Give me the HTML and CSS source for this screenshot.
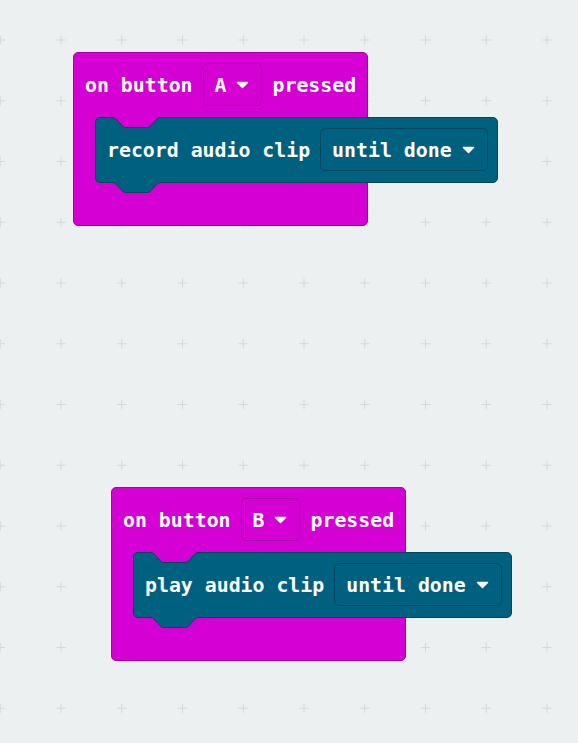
FILE: index.html
```html
<!DOCTYPE html>
<html>
<head>
    <meta charset="utf-8">
    <title>Blocks</title>
    <link rel="stylesheet" href="styles.css">
</head>
<body>
    <div class="workspace">
        <!-- background grid of small crosses -->
        <svg class="grid" width="578" height="743">
            <defs>
                <pattern id="grid-cross" x="-30.125" y="9.625" width="60.75" height="60.75" patternUnits="userSpaceOnUse">
                    <path d="M25.6 30.375 H35.15 M30.375 25.6 V35.15" stroke="#d3d8db" stroke-width="1"/>
                </pattern>
            </defs>
            <rect width="100%" height="100%" fill="url(#grid-cross)"/>
        </svg>

        <div class="event stack-a">
            <div class="event-head">
                <span class="label">on button</span>
                <span class="dropdown">A<svg class="caret" width="13" height="8" viewBox="0 0 13 8"><path d="M1.5 1.5 H11.5 L6.5 6.5 Z"/></svg></span>
                <span class="label">pressed</span>
            </div>
            <div class="event-body">
                <div class="statement">
                    <svg class="notch" width="52" height="12" viewBox="0 0 52 12">
                        <path class="notch-fill" d="M1 0 V0.5 C3 0.5 4 1 5 2 L11 8.5 C12.5 10 13 10.5 15 10.5 H36 C38 10.5 38.5 10 40 8.5 L46 2 C47 1 48 0.5 50 0.5 V0 Z"/>
                        <path class="edge" d="M1 0.5 C3 0.5 4 1 5 2 L11 8.5 C12.5 10 13 10.5 15 10.5 H36 C38 10.5 38.5 10 40 8.5 L46 2 C47 1 48 0.5 50 0.5"/>
                    </svg>
                    <span class="label">record audio clip</span>
                    <span class="dropdown">until done<svg class="caret" width="13" height="8" viewBox="0 0 13 8"><path d="M1.5 1.5 H11.5 L6.5 6.5 Z"/></svg></span>
                    <svg class="tab" width="52" height="12" viewBox="0 0 52 12">
                        <path class="tab-fill" d="M1 0 V0.5 C3 0.5 4 1 5 2 L11 8.5 C12.5 10 13 10.5 15 10.5 H36 C38 10.5 38.5 10 40 8.5 L46 2 C47 1 48 0.5 50 0.5 V0 Z"/>
                        <path class="edge" d="M1 0.5 C3 0.5 4 1 5 2 L11 8.5 C12.5 10 13 10.5 15 10.5 H36 C38 10.5 38.5 10 40 8.5 L46 2 C47 1 48 0.5 50 0.5"/>
                    </svg>
                </div>
            </div>
            <div class="event-foot"></div>
        </div>

        <div class="event stack-b">
            <div class="event-head">
                <span class="label">on button</span>
                <span class="dropdown">B<svg class="caret" width="13" height="8" viewBox="0 0 13 8"><path d="M1.5 1.5 H11.5 L6.5 6.5 Z"/></svg></span>
                <span class="label">pressed</span>
            </div>
            <div class="event-body">
                <div class="statement">
                    <svg class="notch" width="52" height="12" viewBox="0 0 52 12">
                        <path class="notch-fill" d="M1 0 V0.5 C3 0.5 4 1 5 2 L11 8.5 C12.5 10 13 10.5 15 10.5 H36 C38 10.5 38.5 10 40 8.5 L46 2 C47 1 48 0.5 50 0.5 V0 Z"/>
                        <path class="edge" d="M1 0.5 C3 0.5 4 1 5 2 L11 8.5 C12.5 10 13 10.5 15 10.5 H36 C38 10.5 38.5 10 40 8.5 L46 2 C47 1 48 0.5 50 0.5"/>
                    </svg>
                    <span class="label">play audio clip</span>
                    <span class="dropdown">until done<svg class="caret" width="13" height="8" viewBox="0 0 13 8"><path d="M1.5 1.5 H11.5 L6.5 6.5 Z"/></svg></span>
                    <svg class="tab" width="52" height="12" viewBox="0 0 52 12">
                        <path class="tab-fill" d="M1 0 V0.5 C3 0.5 4 1 5 2 L11 8.5 C12.5 10 13 10.5 15 10.5 H36 C38 10.5 38.5 10 40 8.5 L46 2 C47 1 48 0.5 50 0.5 V0 Z"/>
                        <path class="edge" d="M1 0.5 C3 0.5 4 1 5 2 L11 8.5 C12.5 10 13 10.5 15 10.5 H36 C38 10.5 38.5 10 40 8.5 L46 2 C47 1 48 0.5 50 0.5"/>
                    </svg>
                </div>
            </div>
            <div class="event-foot"></div>
        </div>
    </div>
</body>
</html>
```

FILE: styles.css
```css
body {
    margin: 0;
    background-color: #ecf0f1;
    font-family: "DejaVu Sans Mono", monospace;
}
.workspace {
    position: relative;
    width: 578px;
    height: 743px;
    overflow: hidden;
    background-color: #ecf0f1;
}
.grid {
    position: absolute;
    left: 0;
    top: 0;
}

/* hat block with a slot for one statement */
.event {
    position: absolute;
    display: flex;
    flex-direction: column;
    background-color: #d400d4;
    border: 1px solid #a800a8;
    border-radius: 5px;
}
.stack-a {
    left: 73px;
    top: 52px;
}
.stack-b {
    left: 111px;
    top: 487px;
}
.event-head {
    display: flex;
    align-items: center;
    gap: 10px;
    padding: 10px 11px 11px 11px;
}
.event-body {
    width: 0;
    padding-left: 21px;
}
.event-foot {
    height: 42px;
}

.label {
    color: #fff;
    font-weight: bold;
    font-size: 19.85px;
    line-height: 41px;
    padding-top: 2px;
    white-space: pre;
}
.dropdown {
    display: flex;
    align-items: center;
    height: 43px;
    box-sizing: border-box;
    padding: 2px 12px 0 11px;
    border: 1px solid #a300a3;
    border-radius: 5px;
    color: #fff;
    font-weight: bold;
    font-size: 19.85px;
    line-height: 39px;
    white-space: pre;
}
.caret {
    margin-left: 10px;
    margin-top: -1px;
}
.caret path {
    fill: #fff;
    stroke: #fff;
    stroke-width: 1.5;
    stroke-linejoin: round;
}

/* statement block */
.statement {
    position: relative;
    display: flex;
    align-items: center;
    gap: 10px;
    width: max-content;
    padding: 10px 9px 11px 11px;
    background-color: #00607f;
    border: 1px solid #00465d;
    border-radius: 5px;
}
.statement .dropdown {
    border-color: #00465d;
}
.notch {
    position: absolute;
    left: 15px;
    top: -1px;
}
.tab {
    position: absolute;
    left: 15px;
    top: 100%;
}
.notch-fill {
    fill: #d400d4;
}
.tab-fill {
    fill: #00607f;
}
.edge {
    fill: none;
    stroke: #00465d;
    stroke-width: 1;
}
```
